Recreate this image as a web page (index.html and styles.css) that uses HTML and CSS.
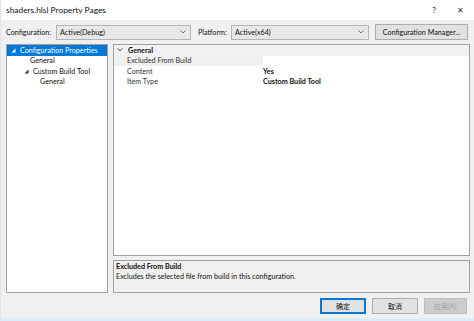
FILE: index.html
```html
<!DOCTYPE html>
<html lang="en">
<head>
  <meta charset="UTF-8">
  <title>shaders.hlsl Property Pages</title>
  <link rel="stylesheet" href="styles.css">
</head>
<body>
  <div class="window">
    <div class="titlebar">
      <span class="title">shaders.hlsl Property Pages</span>
      <span class="help">?</span>
      <span class="close">&#x2715;</span>
    </div>

    <div class="config-row">
      <label class="cfg-label">Configuration:</label>
      <div class="select sel-config">
        <span>Active(Debug)</span>
        <svg class="arrow" width="6" height="4" viewBox="0 0 6 4"><path d="M0.5 0.5 L3 3 L5.5 0.5" fill="none" stroke="#555" stroke-width="0.8"/></svg>
      </div>
      <label class="plat-label">Platform:</label>
      <div class="select sel-platform">
        <span>Active(x64)</span>
        <svg class="arrow" width="6" height="4" viewBox="0 0 6 4"><path d="M0.5 0.5 L3 3 L5.5 0.5" fill="none" stroke="#555" stroke-width="0.8"/></svg>
      </div>
      <button class="btn cfg-manager">Configuration Manager...</button>
    </div>

    <div class="content">
      <div class="tree">
        <div class="node selected lvl0">
          <svg class="tri" width="5" height="5" viewBox="0 0 5 5"><path d="M4.5 0.5 L4.5 4.5 L0.5 4.5 Z" fill="#fff"/></svg>
          <span>Configuration Properties</span>
        </div>
        <div class="node lvl1">General</div>
        <div class="node lvl1b">
          <svg class="tri" width="5" height="5" viewBox="0 0 5 5"><path d="M4.5 0.5 L4.5 4.5 L0.5 4.5 Z" fill="#333"/></svg>
          <span>Custom Build Tool</span>
        </div>
        <div class="node lvl2">General</div>
      </div>

      <div class="right">
        <div class="grid">
          <div class="cat">
            <svg class="chev" width="6" height="4" viewBox="0 0 6 4"><path d="M0.5 0.5 L3 3 L5.5 0.5" fill="none" stroke="#444" stroke-width="0.9"/></svg>
            <span>General</span>
          </div>
          <div class="prop active">
            <span class="name">Excluded From Build</span>
            <span class="value"></span>
          </div>
          <div class="prop">
            <span class="name">Content</span>
            <span class="value">Yes</span>
          </div>
          <div class="prop">
            <span class="name">Item Type</span>
            <span class="value">Custom Build Tool</span>
          </div>
        </div>
        <div class="desc">
          <div class="desc-title">Excluded From Build</div>
          <div class="desc-text">Excludes the selected file from build in this configuration.</div>
        </div>
      </div>
    </div>

    <div class="buttons">
      <button class="btn dlg default">确定</button>
      <button class="btn dlg">取消</button>
      <button class="btn dlg disabled">应用(A)</button>
    </div>
  </div>
  <div class="edge"></div>
</body>
</html>
```

FILE: styles.css
```css
html, body {
  margin: 0;
  padding: 0;
}

body {
  width: 474px;
  height: 321px;
  overflow: hidden;
  font-family: Lato, 'Noto Sans CJK SC', sans-serif;
  font-size: 7.2px;
  color: #111;
  background: #f0f0f0;
}

.window {
  height: 318px;
  display: flex;
  flex-direction: column;
  border-left: 1px solid #d6e8f6;
  box-sizing: border-box;
}

.titlebar {
  height: 20px;
  background: #fff;
  display: flex;
  align-items: center;
  padding-left: 5px;
  font-size: 8.4px;
}

.title {
  flex: 1;
}

.help {
  width: 30px;
  text-align: center;
  font-size: 8px;
}

.close {
  width: 22px;
  margin-right: 3px;
  text-align: center;
  font-size: 8px;
  color: #333;
}

.config-row {
  height: 24px;
  display: flex;
  align-items: center;
  padding: 0 5px 0 5px;
}

.select {
  height: 15px;
  box-sizing: border-box;
  border: 1px solid #b4b4b4;
  background: #e8e8e8;
  display: flex;
  align-items: center;
  justify-content: space-between;
  padding: 0 4px 0 3px;
}

.cfg-label {
  width: 50px;
}

.sel-config {
  width: 135px;
}

.plat-label {
  margin-left: 7px;
  width: 33px;
}

.sel-platform {
  width: 138px;
}

.btn {
  font-family: inherit;
  font-size: inherit;
  color: #111;
  background: #e1e1e1;
  border: 1px solid #adadad;
  padding: 0;
  box-sizing: border-box;
}

.cfg-manager {
  margin-left: 6px;
  width: 93px;
  height: 16px;
}

.content {
  flex: 1;
  display: flex;
  gap: 5px;
  padding: 0 4px 0 5px;
}

.tree {
  width: 102px;
  box-sizing: border-box;
  background: #fff;
  border: 1px solid #a0a0a0;
}

.node {
  height: 10.5px;
  display: flex;
  align-items: center;
  white-space: nowrap;
}

.node.selected {
  background: #0078d7;
  color: #fff;
}

.tri {
  margin-right: 4px;
}

.lvl0 { padding-left: 4px; }
.lvl1 { padding-left: 23px; }
.lvl1b { padding-left: 17px; }
.lvl2 { padding-left: 33px; }

.right {
  flex: 1;
  display: flex;
  flex-direction: column;
  gap: 4px;
}

.grid {
  flex: 1;
  background: #fff;
  border: 1px solid #a0a0a0;
}

.cat {
  height: 10.5px;
  display: flex;
  align-items: center;
  background: #f2f2f4;
  font-weight: bold;
}

.chev {
  margin: 0 5px 0 3px;
}

.prop {
  height: 10.5px;
  display: flex;
  align-items: center;
  padding-left: 13px;
}

.prop .name {
  width: 136px;
  color: #333;
}

.prop .value {
  font-weight: bold;
}

.prop.active {
  background: linear-gradient(to right, #f0f0f0 149px, #fff 149px);
}

.desc {
  height: 33px;
  box-sizing: border-box;
  border: 1px solid #a0a0a0;
  background: #f0f0f0;
  padding: 1px 2px;
  line-height: 10px;
}

.desc-title {
  font-weight: bold;
}

.buttons {
  height: 25px;
  display: flex;
  align-items: center;
  justify-content: flex-end;
  gap: 6px;
  padding-right: 7px;
}

.dlg {
  width: 46px;
  height: 16px;
  font-family: 'Noto Sans CJK SC', sans-serif;
  font-size: 7px;
}

.dlg.default {
  border: 2px solid #0078d7;
}

.dlg.disabled {
  width: 43px;
  color: #a0a0a0;
  background: #ccc;
  border-color: #bfbfbf;
}

.edge {
  height: 3px;
  background: #d9ecfa;
}
```
